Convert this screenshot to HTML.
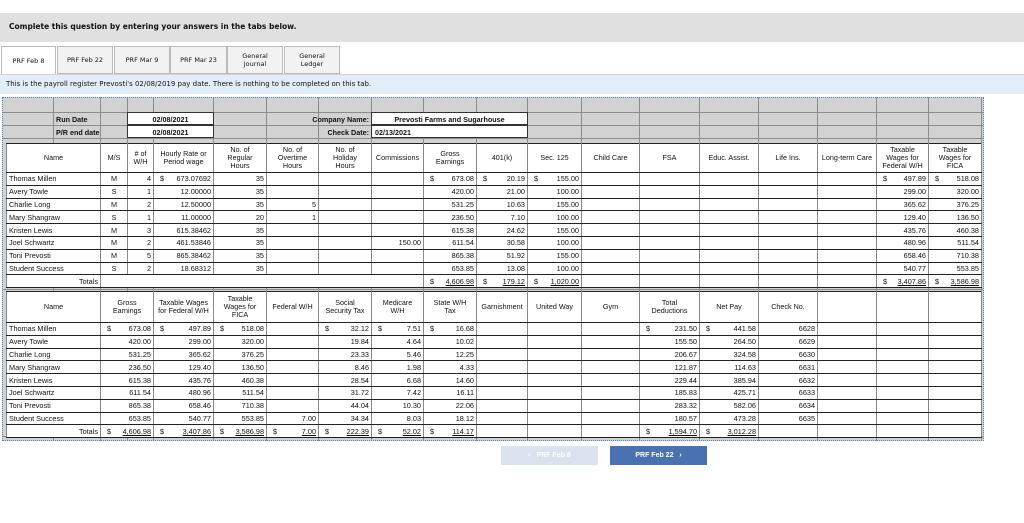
<!DOCTYPE html>
<html><head><meta charset="utf-8"><style>
*{margin:0;padding:0;box-sizing:border-box}
body{width:1024px;height:523px;background:#fff;font-family:"Liberation Sans",sans-serif;position:relative;overflow:hidden;color:#111}
.banner{position:absolute;left:0;top:13px;width:1024px;height:29px;background:#e0e0e0;font-family:"DejaVu Sans",sans-serif;font-weight:bold;font-size:7.5px;padding:9px 0 0 9px}
.tabs{position:absolute;top:46px;left:1px;height:28px}
.tab{position:absolute;top:0;height:28px;border:1px solid #bbb;background:#f2f2f2;font-family:"DejaVu Sans",sans-serif;font-size:6.5px;text-align:center;display:flex;align-items:center;justify-content:center;line-height:8px}
.tab.on{background:#fff;border-bottom:none;height:29px}
.info{position:absolute;top:74px;left:0;width:1024px;height:20px;background:#e3edf7;border-top:1px solid #c7d3df;font-family:"DejaVu Sans",sans-serif;font-size:7px;padding:5px 0 0 6px}
.sheet{position:absolute;left:2px;top:97px;width:982px;height:344px;border:1px dotted #5b7fbf;background:#d2d2d2}
.vl{position:absolute;top:97px;width:1px;background:#8c8c8c}
.hl{position:absolute;left:3px;height:1px;width:980px;background:#8c8c8c}
.box{position:absolute;font-size:7.2px;font-weight:bold;background:#fff;border:1px solid #333;padding:2px 3px;height:13px}
.lbl{position:absolute;font-size:7.2px;font-weight:bold}
table{position:absolute;border-collapse:collapse;table-layout:fixed;background:#fff;font-size:7.3px}
td{border:1px solid #222;border-left-color:#888;border-right-color:#888;padding:0 2px;white-space:nowrap;overflow:hidden;height:12.8px;line-height:11px}
tr.h td{text-align:center;line-height:7.8px;white-space:normal;font-size:7.2px;padding:0 7px}
tr.h td.n{padding:0 1px}
td.r{text-align:right}td.c{text-align:center}
i{font-style:normal;float:left;padding-left:4px}
u{text-decoration:underline}
.btn{position:absolute;top:446px;height:19px;font-size:7px;font-weight:bold;color:#fff;text-align:center;line-height:19px}
</style></head><body>
<div class="banner">Complete this question by entering your answers in the tabs below.</div>
<div class="tabs">
<div class="tab on" style="left:0;width:55px">PRF Feb 8</div>
<div class="tab" style="left:56px;width:56px">PRF Feb 22</div>
<div class="tab" style="left:113px;width:56px">PRF Mar 9</div>
<div class="tab" style="left:169px;width:57px">PRF Mar 23</div>
<div class="tab" style="left:226px;width:56px">General<br>Journal</div>
<div class="tab" style="left:283px;width:56px">General<br>Ledger</div>
</div>
<div class="info">This is the payroll register Prevosti's 02/08/2019 pay date. There is nothing to be completed on this tab.</div>
<div class="sheet"></div>
<div class="vl" style="left:53px;height:344px"></div><div class="vl" style="left:100px;height:344px"></div><div class="vl" style="left:127px;height:344px"></div><div class="vl" style="left:153px;height:344px"></div><div class="vl" style="left:213px;height:344px"></div><div class="vl" style="left:266px;height:344px"></div><div class="vl" style="left:318px;height:344px"></div><div class="vl" style="left:371px;height:344px"></div><div class="vl" style="left:423px;height:344px"></div><div class="vl" style="left:476px;height:344px"></div><div class="vl" style="left:527px;height:344px"></div><div class="vl" style="left:581px;height:344px"></div><div class="vl" style="left:639px;height:344px"></div><div class="vl" style="left:699px;height:344px"></div><div class="vl" style="left:758px;height:344px"></div><div class="vl" style="left:817px;height:344px"></div><div class="vl" style="left:876px;height:344px"></div><div class="vl" style="left:928px;height:344px"></div><div class="vl" style="left:981px;height:344px"></div>
<div class="hl" style="top:112px"></div><div class="hl" style="top:125px"></div><div class="hl" style="top:138px"></div><div class="hl" style="top:289px"></div><div class="hl" style="top:436px"></div>
<div class="lbl" style="left:56px;top:115px">Run Date</div>
<div class="lbl" style="left:56px;top:128px">P/R end date</div>
<div class="box" style="left:127px;top:112px;width:87px;text-align:center">02/08/2021</div>
<div class="box" style="left:127px;top:125px;width:87px;text-align:center">02/08/2021</div>
<div class="lbl" style="left:266px;top:115px;width:103px;text-align:right">Company Name:</div>
<div class="lbl" style="left:266px;top:128px;width:103px;text-align:right">Check Date:</div>
<div class="box" style="left:371px;top:112px;width:157px;text-align:center">Prevosti Farms and Sugarhouse</div>
<div class="box" style="left:371px;top:125px;width:157px">02/13/2021</div>

<table style="left:6px;top:143px;width:976px">
<colgroup><col style="width:94px"><col style="width:27px"><col style="width:26px"><col style="width:60px"><col style="width:53px"><col style="width:52px"><col style="width:53px"><col style="width:52px"><col style="width:53px"><col style="width:51px"><col style="width:54px"><col style="width:58px"><col style="width:60px"><col style="width:59px"><col style="width:59px"><col style="width:59px"><col style="width:52px"><col style="width:53px"></colgroup>
<tr class="h" style="height:29px"><td>Name</td><td class="n">M/S</td><td class="n"># of W/H</td><td class="n" style="padding:0 6px">Hourly Rate or Period wage</td><td>No. of Regular Hours</td><td>No. of Overtime Hours</td><td>No. of Holiday Hours</td><td class="n">Commissions</td><td>Gross Earnings</td><td>401(k)</td><td>Sec. 125</td><td>Child Care</td><td>FSA</td><td>Educ. Assist.</td><td>Life Ins.</td><td class="n">Long-term Care</td><td class="n" style="padding:0 3px">Taxable Wages for Federal W/H</td><td>Taxable Wages for FICA</td></tr>
<tr><td>Thomas Millen</td><td class="c">M</td><td class="r">4</td><td class="r"><i>$</i>673.07692</td><td class="r">35</td><td></td><td></td><td></td><td class="r"><i>$</i>673.08</td><td class="r"><i>$</i>20.19</td><td class="r"><i>$</i>155.00</td><td></td><td></td><td></td><td></td><td></td><td class="r"><i>$</i>497.89</td><td class="r"><i>$</i>518.08</td></tr>
<tr><td>Avery Towle</td><td class="c">S</td><td class="r">1</td><td class="r">12.00000</td><td class="r">35</td><td></td><td></td><td></td><td class="r">420.00</td><td class="r">21.00</td><td class="r">100.00</td><td></td><td></td><td></td><td></td><td></td><td class="r">299.00</td><td class="r">320.00</td></tr>
<tr><td>Charlie Long</td><td class="c">M</td><td class="r">2</td><td class="r">12.50000</td><td class="r">35</td><td class="r">5</td><td></td><td></td><td class="r">531.25</td><td class="r">10.63</td><td class="r">155.00</td><td></td><td></td><td></td><td></td><td></td><td class="r">365.62</td><td class="r">376.25</td></tr>
<tr><td>Mary Shangraw</td><td class="c">S</td><td class="r">1</td><td class="r">11.00000</td><td class="r">20</td><td class="r">1</td><td></td><td></td><td class="r">236.50</td><td class="r">7.10</td><td class="r">100.00</td><td></td><td></td><td></td><td></td><td></td><td class="r">129.40</td><td class="r">136.50</td></tr>
<tr><td>Kristen Lewis</td><td class="c">M</td><td class="r">3</td><td class="r">615.38462</td><td class="r">35</td><td></td><td></td><td></td><td class="r">615.38</td><td class="r">24.62</td><td class="r">155.00</td><td></td><td></td><td></td><td></td><td></td><td class="r">435.76</td><td class="r">460.38</td></tr>
<tr><td>Joel Schwartz</td><td class="c">M</td><td class="r">2</td><td class="r">461.53846</td><td class="r">35</td><td></td><td></td><td class="r">150.00</td><td class="r">611.54</td><td class="r">30.58</td><td class="r">100.00</td><td></td><td></td><td></td><td></td><td></td><td class="r">480.96</td><td class="r">511.54</td></tr>
<tr><td>Toni Prevosti</td><td class="c">M</td><td class="r">5</td><td class="r">865.38462</td><td class="r">35</td><td></td><td></td><td></td><td class="r">865.38</td><td class="r">51.92</td><td class="r">155.00</td><td></td><td></td><td></td><td></td><td></td><td class="r">658.46</td><td class="r">710.38</td></tr>
<tr><td>Student Success</td><td class="c">S</td><td class="r">2</td><td class="r">18.68312</td><td class="r">35</td><td></td><td></td><td></td><td class="r">653.85</td><td class="r">13.08</td><td class="r">100.00</td><td></td><td></td><td></td><td></td><td></td><td class="r">540.77</td><td class="r">553.85</td></tr>
<tr><td class="r">Totals</td><td colspan="7"></td><td class="r"><i>$</i><u>4,606.98</u></td><td class="r"><i>$</i><u>179.12</u></td><td class="r"><i>$</i><u>1,020.00</u></td><td></td><td></td><td></td><td></td><td></td><td class="r"><i>$</i><u>3,407.86</u></td><td class="r"><i>$</i><u>3,586.98</u></td></tr>
</table>

<table style="left:6px;top:291px;width:976px">
<colgroup><col style="width:94px"><col style="width:53px"><col style="width:60px"><col style="width:53px"><col style="width:52px"><col style="width:53px"><col style="width:52px"><col style="width:53px"><col style="width:51px"><col style="width:54px"><col style="width:58px"><col style="width:60px"><col style="width:59px"><col style="width:59px"><col style="width:59px"><col style="width:52px"><col style="width:53px"></colgroup>
<tr class="h" style="height:31px"><td>Name</td><td>Gross Earnings</td><td class="n">Taxable Wages for Federal W/H</td><td>Taxable Wages for FICA</td><td class="n">Federal W/H</td><td class="n" style="padding:0 4px">Social Security Tax</td><td>Medicare W/H</td><td>State W/H Tax</td><td class="n">Garnishment</td><td class="n">United Way</td><td>Gym</td><td>Total Deductions</td><td>Net Pay</td><td class="n">Check No.</td><td></td><td></td><td></td></tr>
<tr><td>Thomas Millen</td><td class="r"><i>$</i>673.08</td><td class="r"><i>$</i>497.89</td><td class="r"><i>$</i>518.08</td><td></td><td class="r"><i>$</i>32.12</td><td class="r"><i>$</i>7.51</td><td class="r"><i>$</i>16.68</td><td></td><td></td><td></td><td class="r"><i>$</i>231.50</td><td class="r"><i>$</i>441.58</td><td class="r">6628</td><td></td><td></td><td></td></tr>
<tr><td>Avery Towle</td><td class="r">420.00</td><td class="r">299.00</td><td class="r">320.00</td><td></td><td class="r">19.84</td><td class="r">4.64</td><td class="r">10.02</td><td></td><td></td><td></td><td class="r">155.50</td><td class="r">264.50</td><td class="r">6629</td><td></td><td></td><td></td></tr>
<tr><td>Charlie Long</td><td class="r">531.25</td><td class="r">365.62</td><td class="r">376.25</td><td></td><td class="r">23.33</td><td class="r">5.46</td><td class="r">12.25</td><td></td><td></td><td></td><td class="r">206.67</td><td class="r">324.58</td><td class="r">6630</td><td></td><td></td><td></td></tr>
<tr><td>Mary Shangraw</td><td class="r">236.50</td><td class="r">129.40</td><td class="r">136.50</td><td></td><td class="r">8.46</td><td class="r">1.98</td><td class="r">4.33</td><td></td><td></td><td></td><td class="r">121.87</td><td class="r">114.63</td><td class="r">6631</td><td></td><td></td><td></td></tr>
<tr><td>Kristen Lewis</td><td class="r">615.38</td><td class="r">435.76</td><td class="r">460.38</td><td></td><td class="r">28.54</td><td class="r">6.68</td><td class="r">14.60</td><td></td><td></td><td></td><td class="r">229.44</td><td class="r">385.94</td><td class="r">6632</td><td></td><td></td><td></td></tr>
<tr><td>Joel Schwartz</td><td class="r">611.54</td><td class="r">480.96</td><td class="r">511.54</td><td></td><td class="r">31.72</td><td class="r">7.42</td><td class="r">16.11</td><td></td><td></td><td></td><td class="r">185.83</td><td class="r">425.71</td><td class="r">6633</td><td></td><td></td><td></td></tr>
<tr><td>Toni Prevosti</td><td class="r">865.38</td><td class="r">658.46</td><td class="r">710.38</td><td></td><td class="r">44.04</td><td class="r">10.30</td><td class="r">22.06</td><td></td><td></td><td></td><td class="r">283.32</td><td class="r">582.06</td><td class="r">6634</td><td></td><td></td><td></td></tr>
<tr><td>Student Success</td><td class="r">653.85</td><td class="r">540.77</td><td class="r">553.85</td><td class="r">7.00</td><td class="r">34.34</td><td class="r">8.03</td><td class="r">18.12</td><td></td><td></td><td></td><td class="r">180.57</td><td class="r">473.28</td><td class="r">6635</td><td></td><td></td><td></td></tr>
<tr><td class="r">Totals</td><td class="r"><i>$</i><u>4,606.98</u></td><td class="r"><i>$</i><u>3,407.86</u></td><td class="r"><i>$</i><u>3,586.98</u></td><td class="r"><i>$</i><u>7.00</u></td><td class="r"><i>$</i><u>222.39</u></td><td class="r"><i>$</i><u>52.02</u></td><td class="r"><i>$</i><u>114.17</u></td><td></td><td></td><td></td><td class="r"><i>$</i><u>1,594.70</u></td><td class="r"><i>$</i><u>3,012.28</u></td><td></td><td></td><td></td><td></td></tr>
</table>

<div class="btn" style="left:501px;width:97px;background:#d9e2ee">&lsaquo;&nbsp;&nbsp; PRF Feb 8</div>
<div class="btn" style="left:610px;width:97px;background:#4a72b0">PRF Feb 22 &nbsp;&nbsp;&rsaquo;</div>
</body></html>
